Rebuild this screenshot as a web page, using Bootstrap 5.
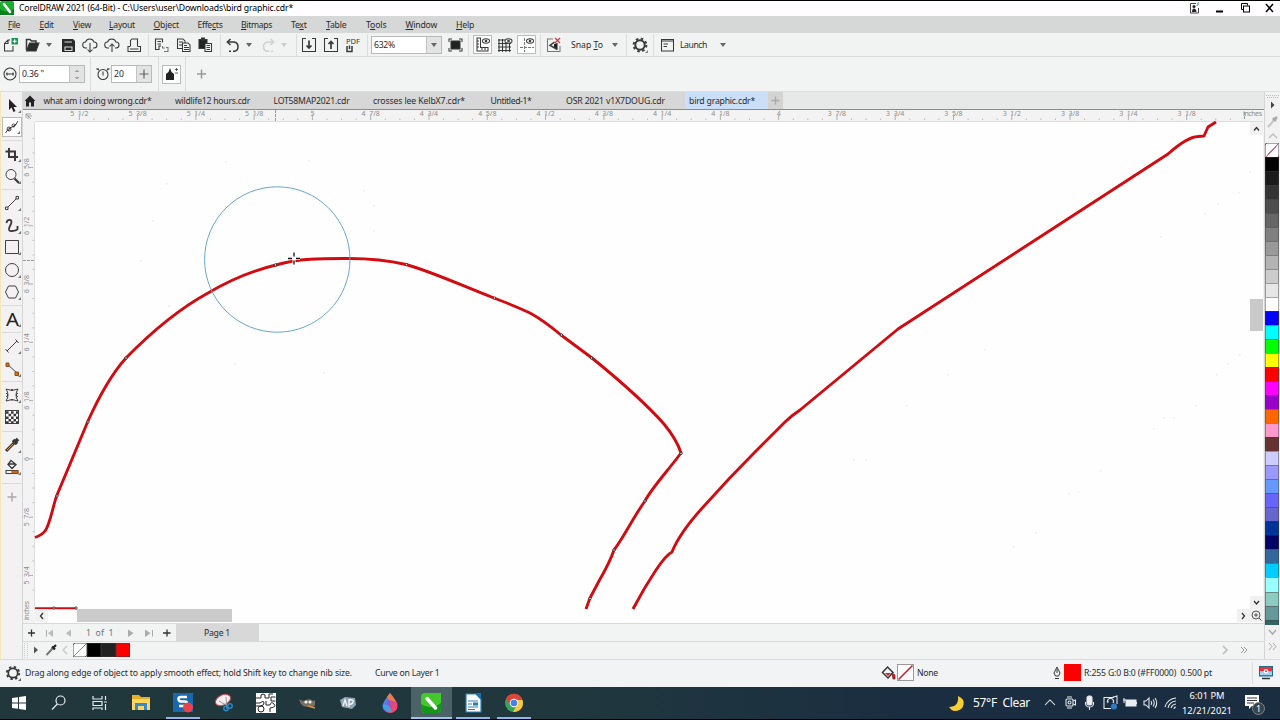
<!DOCTYPE html>
<html lang="en">
<head>
<meta charset="utf-8">
<title>CorelDRAW 2021</title>
<link href="https://cdn.jsdelivr.net/npm/bootstrap@5.3.0/dist/css/bootstrap.min.css" rel="stylesheet">
<style>
body{width:1280px;height:720px;overflow:hidden;background:#f2f3f3;font:8.7px/12px "Noto Sans","Open Sans",sans-serif;color:#2c2c2c;border-top:1px solid #000;border-bottom:1px solid #000}
svg{display:block;flex:none;overflow:visible}
.ic{width:16px;height:16px;fill:none;stroke:#383838;stroke-width:1.05}
.strip{display:grid;align-items:center;justify-items:start;white-space:nowrap}
[data-w]{white-space:nowrap;flex:none}
.titlebar{height:15px;background:#fffdff;padding-bottom:1px;grid-template-columns:19px 1170px 26px 26px 24px auto}
.menubar{height:17px;background:#d6d8d7;padding:1px 0 0 8px;grid-template-columns:31.5px 33.5px 36px 44.5px 44px 43.5px 50px 35px 40px 39.5px 50.5px auto}
.menubar u{text-underline-offset:1px}
.toolbar{height:24px;background:#f1f3f2;border-bottom:1px solid #dadada;padding-left:3px;grid-template-columns:22px 21px 15px 21px 22px 22px 22px 6px 22px 22px 22px 5px 21px 15px 20px 15px 5px 22px 22px 22px 4px 77px 20px 5px 24px 20px 23px 6px 25px 41px 14px 6px 21px 7px 20px 40px auto}
.propbar{height:35px;border-bottom:1px solid #dedede;padding-left:2px;grid-template-columns:17px 71px 6px 15px 47px 4px 23px 9px auto}
.vsep{width:1px;height:22px;background:#dcdcdc}
.propbar .vsep{height:34px}
.dd{border:3px solid transparent;border-top:4px solid #666;border-bottom:0;width:0;height:0}
.dd.faint{border-top-color:#ccc}
.field{height:18px;border:1px solid #b9b9b9;background:#fff;padding-left:2px}
.field .knob{background:#e3e3e3;border-left:1px solid #c4c4c4}
.pressed{width:19px;height:19px;background:#fff;border:1px solid #bbb;display:flex;align-items:center;justify-content:center}
.toolbox{width:23px;flex:none;border-left:1px solid #f4e6b8;border-right:1px solid #d6d6d6;padding-top:3px;background:#f2f2f2;display:grid;align-content:start;justify-items:center;grid-template-rows:22px 27px 22px 27px 23px 21px 23px 22px 27px 27px 23px 26px 22px 28px 22px 30px 20px}
.tool{position:relative;width:20px;height:20px;display:flex;align-items:center;justify-content:center}
.tool .ic{stroke-width:.95}
.fly::after{content:"";position:absolute;right:1px;bottom:2px;border-left:3px solid transparent;border-bottom:3px solid #777}
.rule::before{content:"";position:absolute;left:0;right:0;top:-4px;height:1px;background:#dadada}
.tabs{height:18px;background:#e7e8e8;border-bottom:1px solid #45a5bd}
.tabset{background:#d7d7d7;height:17px;width:662px;padding-top:1px;grid-template-columns:20.5px 131.5px 98.5px 99.5px 117.5px 75.5px auto}
.tab-on{background:#cbdff8;width:83px;height:17px;padding:1px 0 0 4px}
.tab-add{width:15px;height:17px;background:#d3d3d3}
.ruler text{font-size:7px;fill:#8c8c8c}
.sheet{background:#fefefe}
.sb-btn{background:#f1f1f1;width:13px;height:13px}
.pagenav{height:19px;border-top:1px solid #d9dada;border-bottom:1px solid #d9dada;padding-left:4px;grid-template-columns:18px 19px 22px 42px 17px 18px 13px auto}
.page-on{background:#d8d8d8;width:83px;height:17px;display:flex;align-items:center;padding-left:28px}
.docpal{height:16px;grid-template-columns:10px 12px 16px 12px auto 18px 24px}
.sw{border:1px solid rgba(60,60,60,.45);width:14.2px;height:14px}
.palette{width:16px;flex:none;border-left:1px solid #d4d4d4;background:#f2f2f2}
.palette .sw{height:14.02px;flex:none;border-width:1px 1px 0 1px;width:14px}
.status{height:28px;border-top:1px solid #dadada;background:#f2f3f4;padding:0 0 2px 5px;grid-template-columns:20px 350px 506px 16px 20px 136px 11px 20px 168px 7px auto}
.taskbar{height:32px;background:linear-gradient(90deg,#21373c 0,#20373e 45%,#1b2e41 70%,#1b2d40 100%);color:#fff}
.app{width:41.4px;height:32px;display:flex;align-items:center;justify-content:center;flex:none}
.app svg{width:20px;height:20px}
.run{background:linear-gradient(#8db7e8,#8db7e8) center bottom/34px 2px no-repeat}
.run.on{background:linear-gradient(#9cc4ee,#9cc4ee) center bottom/41px 2px no-repeat,#4b6266}
.tray{grid-template-columns:24px 71px 21px 19px 19px 20px 20px 22px 17px 63px auto}
.tray .ic{stroke:#e8edf0}
#zoomField{width:71px}#nib{width:66px}#rate{width:41px}
#work{height:567px}#doc{width:1241px;flex:none}
#vbar{width:13px}#vthumb{height:32px;background:#c9c9c9;margin-top:164px}
#hbar{height:14px}#hthumb{width:155px;background:#cbcbcb;margin-left:29px;height:13px}
#start{width:38px}#weather{font-size:12px}#clock{width:50px;font-size:9.3px;line-height:15px}
#tray{width:331px}
</style>
</head>
<body>
<div class="strip titlebar">
  <svg width="14" height="14" viewBox="0 0 14 14"><rect width="14" height="14" rx="2" fill="#16ae2b"/><path d="M0 8Q7 14 14 8V14H0z" fill="#078019"/><path d="M4 3L10 11" stroke="#fff" stroke-width="2.6" stroke-linecap="round"/></svg>
  <span data-w="274" class="text-black">CorelDRAW 2021 (64-Bit) - C:\Users\user\Downloads\bird graphic.cdr*</span>
  <svg width="12" height="12" viewBox="0 0 12 12" fill="none" stroke="#444"><path d="M7 1.5H1.500V11H9.500V6"/><circle cx="5" cy="4.500" r="1.500" fill="#222" stroke="none"/><path d="M3 10Q3 6.500 5 6.500T7.500 10z" fill="#222" stroke="none"/><path d="M8 4A2 2 0 0 1 10 2M8 1.500L10 0.500" stroke="#4aa58e"/></svg>
  <svg width="8" height="12"><path d="M1 9.500H8" stroke="#000" stroke-width="2"/></svg>
  <svg width="9" height="10" viewBox="0 0 9 10" fill="none" stroke="#000"><path d="M2.500 6.500H.500V.500H6.500V2.500"/><rect x="2.500" y="3" width="6" height="6"/></svg>
  <svg width="9" height="10"><path d="M1 1L8 9M8 1L1 9" stroke="#000" stroke-width="1.500"/></svg>
</div>
<nav class="strip menubar">
  <span data-w="12"><u>F</u>ile</span><span data-w="14"><u>E</u>dit</span><span data-w="18"><u>V</u>iew</span><span data-w="26"><u>L</u>ayout</span><span data-w="25.500"><u>O</u>bject</span><span data-w="25">Effe<u>c</u>ts</span><span data-w="31"><u>B</u>itmaps</span><span data-w="15.500">Te<u>x</u>t</span><span data-w="20.500"><u>T</u>able</span><span data-w="20.500">T<u>o</u>ols</span><span data-w="31.500"><u>W</u>indow</span><span data-w="18"><u>H</u>elp</span>
</nav>
<div class="strip toolbar">
  <svg class="ic" viewBox="0 0 16 16"><path d="M7 3H5L1.500 6.500V14H10V9M5 3V6.500H1.500"/><rect x="8.500" y="1" width="6.500" height="6.500" fill="#1c9157" stroke="none"/><path d="M11.700 2.300V6.300M9.700 4.300H13.700" stroke="#fff"/></svg>
  <svg class="ic" viewBox="0 0 16 16"><path d="M1.500 13V2.500H5L6.500 4H11V6" stroke-width="1.500"/><path d="M1.500 14L4.500 6H14L11 14z" fill="#2b2b2b"/></svg>
  <i class="dd"></i>
  <svg class="ic" viewBox="0 0 16 16"><path d="M1 2H12L14 4V15H1z" fill="#2b2b2b" stroke="none"/><path d="M3.500 5H11M4 13.500H11V10H4z" stroke="#ddd" fill="#2b2b2b"/></svg>
  <svg class="ic" viewBox="0 0 16 16"><path d="M5 11H4A3 3 0 0 1 3.500 5A4.500 4.500 0 0 1 12 5A3 3 0 0 1 12 11H11M8 6V15M5.500 12.500L8 15L10.500 12.500"/></svg>
  <svg class="ic" viewBox="0 0 16 16"><path d="M5 11H4A3 3 0 0 1 3.500 5A4.500 4.500 0 0 1 12 5A3 3 0 0 1 12 11H11M8 15V7M5.500 9.500L8 7L10.500 9.500"/></svg>
  <svg class="ic" viewBox="0 0 16 16"><path d="M4.500 9V3.500L6 2H11.500V9M4.500 9.500H2V14.500H14.500V9.500H11.500M4 12H12.500"/></svg>
  <i class="vsep"></i>
  <svg class="ic" viewBox="0 0 16 16"><path d="M7 9H5V12.500H1.500V2H8.500V5.500M3.500 4.500H7M3.500 7H7" /><path d="M8.500 9V11H11M10 14.500H14V10.500H12" stroke="#777"/></svg>
  <svg class="ic" viewBox="0 0 16 16"><path d="M1.500 2H7L9 4V11.500H1.500zM3 5H7M3 8H6"/><path d="M6.500 6H12L14 8V14.500H6.500z" fill="#f5f5f5"/><path d="M8 8.500H11M8 10.500H13M8 12.500H13"/></svg>
  <svg class="ic" viewBox="0 0 16 16"><path d="M1 2.500H9V11.500H1zM3.500 1H6.500V3H3.500z" fill="#222"/><path d="M7 6.500H13.500V14.500H7z" fill="#f5f5f5"/><path d="M8.500 8.500H12M8.500 10.500H12M8.500 12.500H12"/></svg>
  <i class="vsep"></i>
  <svg class="ic" viewBox="0 0 16 16"><path d="M3 5H9A4.700 4.700 0 0 1 9 14.300H8" stroke-width="1.500"/><path d="M5.500 2L2.300 5L5.500 8M4 14.300H6" stroke-width="1.500"/></svg>
  <i class="dd"></i>
  <svg class="ic" viewBox="0 0 16 16"><g stroke="#d0d0d0" stroke-width="1.500"><path d="M12 5H6.500A4.700 4.700 0 0 0 6.500 14.300H8"/><path d="M9.500 2L12.700 5L9.500 8M10 14.300H12"/></g></svg>
  <i class="dd faint"></i>
  <i class="vsep"></i>
  <svg class="ic" viewBox="0 0 16 16"><path d="M5 1.500H1.500V14.500H14.500V1.500H11"/><path d="M8 3.500V11M5.500 8.500L8 11L10.500 8.500" stroke-width="1.700"/></svg>
  <svg class="ic" viewBox="0 0 16 16"><path d="M5 1.500H1.500V14.500H14.500V1.500H11"/><path d="M8 12V4.500M5.500 7L8 4.500L10.500 7" stroke-width="1.700"/></svg>
  <svg class="ic" viewBox="0 0 16 16"><text x="1" y="7" font-size="7.500" textLength="14" lengthAdjust="spacingAndGlyphs" fill="#333" stroke="none">PDF</text><path d="M2 9V14.500H7V9M4.500 8.500V12" stroke-width="1.500"/></svg>
  <i class="vsep"></i>
  <div class="field d-flex align-items-center" id="zoomField"><span data-w="21">632%</span><span class="knob ms-auto h-100 d-flex align-items-center px-1"><i class="dd"></i></span></div>
  <svg class="ic" viewBox="0 0 16 16"><rect x="3" y="4" width="9" height="8" fill="#222"/><path d="M1 5V2H4M11 2H14V5M14 11V14H11M4 14H1V11"/></svg>
  <i class="vsep"></i>
  <span class="pressed"><svg class="ic" viewBox="0 0 16 16"><path d="M2 1V14H13V10.500H5.500V1zM2 4H4M2 7H4M2 10H4M7 11V13M10 11V13"/><ellipse cx="11" cy="4" rx="3.500" ry="2.200"/><circle cx="11" cy="4" r=".8" fill="#333"/></svg></span>
  <svg class="ic" viewBox="0 0 16 16"><path d="M1 3H8M1 6.500H14M1 10H14M1 13.500H14M2 2V15M5.500 2V15M9 6V15M12.500 7V15"/><ellipse cx="11.500" cy="4" rx="3.500" ry="2.200" fill="#f5f5f5"/><circle cx="11.500" cy="4" r=".8" fill="#333"/></svg>
  <span class="pressed"><svg class="ic" viewBox="0 0 16 16"><path d="M5.500 1V15M1 10.500H15" stroke-dasharray="3 1" stroke="#777"/><ellipse cx="11" cy="4" rx="3.500" ry="2.200"/><circle cx="11" cy="4" r=".8" fill="#333"/></svg></span>
  <i class="vsep"></i>
  <svg class="ic" viewBox="0 0 16 16"><path d="M7 2H1.500V14.500H14V9" stroke="#777"/><path d="M8.500 5L4 8.500L11.500 12.500" stroke-width="1.500"/><path d="M8 7L11.500 6V12L8 10z" fill="#222" stroke="none"/><path d="M9 1L14 6M14 1L9 6" stroke="#df3441" stroke-width="1.300"/></svg>
  <span data-w="32">Snap <u>T</u>o</span>
  <i class="dd"></i><i class="vsep"></i>
  <svg class="ic" viewBox="0 0 16 16"><circle cx="8" cy="8" r="4.700" stroke-width="2"/><circle cx="8" cy="8" r="6.400" stroke-width="1.900" stroke-dasharray="2.500 2.526"/><path d="M16 13V16H13z" fill="#888" stroke="none"/></svg>
  <i class="vsep"></i>
  <svg class="ic" viewBox="0 0 16 16"><path d="M1.500 2.500H13.500V14H1.500zM1.500 4H13.500M3.500 7H8M3.500 9.500H7"/></svg>
  <span data-w="27">Launch</span><i class="dd"></i>
</div>
<div class="strip propbar">
  <svg class="ic" viewBox="0 0 16 16"><circle cx="8" cy="8" r="6"/><path d="M4 8H12M5 6.500V9.500M11 6.500V9.500"/></svg>
  <div class="field d-flex align-items-center" id="nib"><span data-w="22">0.36 "</span><span class="knob ms-auto h-100 d-flex align-items-center"><svg width="14" height="14" fill="none" stroke="#666"><path d="M5.500 5L7 3.500L8.500 5M5.500 10L7 11.500L8.500 10"/></svg></span></div>
  <i class="vsep"></i>
  <svg class="ic" viewBox="0 0 16 16"><circle cx="7" cy="8.500" r="5"/><path d="M7 5.500V9.500M.5 2.500L3 4M13.500 2.500L11 4M3 3H.5M11 3H13.500"/></svg>
  <div class="field d-flex align-items-center" id="rate"><span data-w="10">20</span><span class="knob ms-auto h-100 d-flex align-items-center"><svg width="14" height="16" fill="none" stroke="#666"><path d="M2.500 8H11.500M7 3.500V12.500" stroke-width="1.200"/></svg></span></div>
  <i class="vsep"></i>
  <span class="pressed"><svg class="ic" viewBox="0 0 16 16"><path d="M2 14V8L4.500 6L6 2L7.500 6L10 8V14zM2 9H10" fill="#222" stroke="none"/><path d="M12.500 2V5M11 3.500H14M11 7H14" stroke-width=".8"/></svg></span>
  <i class="vsep"></i>
  <svg class="ic" viewBox="0 0 16 16"><path d="M3 8H12M7.500 3.500V12.500" stroke="#999" stroke-width="1.500"/></svg>
</div>
<main class="d-flex" id="work">
  <aside class="toolbox">
    <span class="tool fly"><svg class="ic" viewBox="0 0 16 16"><path d="M5 2V13L7.500 10.500L9.500 15L11.500 14L9.500 10H13z" fill="#222" stroke="none"/></svg></span>
    <span class="pressed tool fly"><svg class="ic" viewBox="0 0 16 16"><path d="M1.500 14Q4 9 8 8T14 2M4 12L7 8M9 8L13 4"/><circle cx="5" cy="10" r="2"/><circle cx="9.500" cy="6.500" r="1.500"/></svg></span>
    <span class="tool fly rule"><svg class="ic" viewBox="0 0 16 16"><path d="M5 2V11H14M1.500 5.500H11V15" stroke-width="2"/></svg></span>
    <span class="tool fly"><svg class="ic" viewBox="0 0 16 16"><circle cx="7" cy="6.500" r="5"/><path d="M10.500 10.500L15 15" stroke-width="2.200"/></svg></span>
    <span class="tool fly rule"><svg class="ic" viewBox="0 0 16 16"><path d="M4 12L12 4M1.500 12H4V14.500H1.500zM12 1.500H14.500V4H12z"/></svg></span>
    <span class="tool fly"><svg class="ic" viewBox="0 0 16 16"><path d="M2.500 5Q3 1.500 6 2T6 8T8 13T13.500 11V8" stroke-width="1.800"/></svg></span>
    <span class="tool fly"><svg class="ic" viewBox="0 0 16 16"><path d="M1.500 1.500H14.500V14.500H1.500z"/></svg></span>
    <span class="tool fly"><svg class="ic" viewBox="0 0 16 16"><circle cx="8" cy="8" r="6.500"/></svg></span>
    <span class="tool fly"><svg class="ic" viewBox="0 0 16 16"><path d="M4.500 2H11.500L14.500 8L11.500 14H4.500L1.500 8z"/></svg></span>
    <span class="tool fly rule"><svg class="ic" viewBox="0 0 16 16"><text x="2" y="14.500" font-size="18" textLength="13" lengthAdjust="spacingAndGlyphs" fill="#222" stroke="none">A</text></svg></span>
    <span class="tool fly rule"><svg class="ic" viewBox="0 0 16 16"><path d="M3 13L13 3M1.500 11L4.500 14.500M11.500 1.500L14.500 5"/></svg></span>
    <span class="tool fly"><svg class="ic" viewBox="0 0 16 16"><path d="M3 3L13 12"/><path d="M2 2H5V5.500H2zM11 11H14.500V14.500H11z" fill="#d56b20" stroke="#8a4a1d"/></svg></span>
    <span class="tool fly rule"><svg class="ic" viewBox="0 0 16 16"><path d="M2 2Q8 5 14 2Q10 8 14 14Q8 11 2 14Q6 8 2 2zM7 2.500H9M7 13H9M2 6L4 8L2 10M14 6L12 8L14 10"/></svg></span>
    <span class="tool"><svg class="ic" viewBox="0 0 16 16"><rect x="1.500" y="1.500" width="13" height="13" fill="#fff"/><path d="M2 3.500H14M2 8.700H14M2 13.500H14" stroke-width="2.500" stroke-dasharray="2.600 2.400"/><path d="M4.500 6H14M4.500 11.200H14" stroke-width="2.500" stroke-dasharray="2.600 2.400"/></svg></span>
    <span class="tool fly rule"><svg class="ic" viewBox="0 0 16 16"><path d="M2 14L10 6" stroke-width="3"/><path d="M3 13L9 7" stroke="#e8a05a"/><path d="M9 3L13 7M10 6L14 2" stroke-width="3.500"/></svg></span>
    <span class="tool fly"><svg class="ic" viewBox="0 0 16 16"><path d="M7 1.500L12 5.500L8 9.500L4 5.500zM5 5H11" stroke-width="1.300"/><rect x="2" y="11.500" width="12" height="3"/><rect x="8" y="12" width="6" height="2" fill="#df722a" stroke="#b7571b"/></svg></span>
    <span class="tool rule"><svg class="ic" viewBox="0 0 16 16"><path d="M3.500 8H12.500M8 3.500V12.500" stroke="#aaa" stroke-width="1.500"/></svg></span>
  </aside>
  <section class="d-flex flex-column" id="doc">
    <div class="tabs d-flex">
      <div class="strip tabset">
        <svg width="14" height="14" viewBox="0 0 14 14"><path d="M7 1.500L1.500 7H3V12.500H6V8.500H8V12.500H11V7H12.500z" fill="#222"/></svg>
        <span data-w="108">what am i doing wrong.cdr*</span><span data-w="75">wildlife12 hours.cdr</span><span data-w="76">LOT58MAP2021.cdr</span><span data-w="92">crosses lee KelbX7.cdr*</span><span data-w="41">Untitled-1*</span><span data-w="99">OSR 2021 v1X7DOUG.cdr</span>
      </div>
      <div class="tab-on d-flex align-items-center"><span data-w="66">bird graphic.cdr*</span></div>
      <div class="tab-add"><svg width="15" height="17"><path d="M3.500 8.500H11.500M7.500 4.500V12.500" stroke="#aaa" stroke-width="1.500"/></svg></div>
    </div>
    <svg class="ruler" id="rulerX" width="1240" height="12" viewBox="23 110 1240 12"></svg>
    <div class="d-flex">
      <svg class="ruler" id="rulerY" width="12" height="501" viewBox="23 122 12 501"></svg>
      <div>
        <div class="d-flex sheet">
          <svg id="art" width="1215" height="487" viewBox="35 122 1215 487" fill="none">
            <g id="specks" fill="#f0e6ee"></g>
            <g stroke="#d30a0f" stroke-width="2.900" stroke-linejoin="round">
              <path d="M35 537.500Q42 535 45 531C50 525 53 505 57 495L88 421Q107 379 126 358Q168 315 208 293Q242 273 276 265C300 258 325 258.500 349 258.500Q380 258.500 406 264.500C433 272 465 287 494 298Q515 306 530 313Q543 320 561 335L592 358Q640 397 664 424Q677 440 681 453C666 473 651 489 645 501C634 516 624 537 614 550Q610 562 599 581L590 598L586 609"/>
              <path d="M633 609Q644 588 656 570Q666 555 672 552Q680 532 705 505Q730 477 755 452L785 422Q791 416 800 410L898 329L1168 154Q1187 137 1198 136.500L1204 136L1208 127L1216 122"/>
              <path d="M35 608.300H77" stroke-width="2"/>
            </g>
            <circle cx="277.300" cy="259.500" r="72.700" stroke="#65a9ca"/>
            <path id="nodes" stroke="#333" fill="#fff" stroke-width=".8"/>
            <path d="M288 258.500H300M294 252.500V264.500" stroke="#fff" stroke-width="3"/>
            <path d="M288 258.500H292M296 258.500H300M294 252.500V256.500M294 260.500V264.500" stroke="#111" stroke-width="1.300"/>
          </svg>
          <div class="d-flex flex-column" id="vbar"><span class="sb-btn"><svg width="13" height="13"><path d="M4 8.500L6.500 5.500L9 8.500" fill="none" stroke="#333" stroke-width="1.300"/></svg></span><span id="vthumb"></span><span class="sb-btn mt-auto"><svg width="13" height="13"><path d="M4 5L6.500 8L9 5" fill="none" stroke="#333" stroke-width="1.300"/></svg></span></div>
        </div>
        <div class="d-flex sheet" id="hbar"><span class="sb-btn"><svg width="13" height="13"><path d="M8 4L5.500 7L8 10" fill="none" stroke="#333" stroke-width="1.300"/></svg></span><span id="hthumb"></span><span class="sb-btn ms-auto"><svg width="13" height="13"><path d="M5 4L7.500 7L5 10" fill="none" stroke="#333" stroke-width="1.300"/></svg></span><span class="sb-btn"><svg width="13" height="13" fill="none" stroke="#555"><circle cx="6" cy="6" r="4"/><path d="M9 9L11.500 11.500M4 6H8M6 4V8"/></svg></span></div>
      </div>
    </div>
    <div class="strip pagenav">
      <svg width="10" height="10"><path d="M1 5H8M4.500 1.500V8.500" stroke="#333" stroke-width="1.300"/></svg>
      <svg width="9" height="10"><path d="M1.500 2V8.500" stroke="#aaa"/><path d="M8 1.500V9L3 5.250z" fill="#bbb"/></svg>
      <svg width="8" height="10"><path d="M7 1.500V9L2 5.250z" fill="#bbb"/></svg>
      <span data-w="27.500" class="text-secondary">1 &nbsp;of &nbsp;1</span>
      <svg width="8" height="10"><path d="M0 1.500V9L5.500 5.250z" fill="#aaa"/></svg>
      <svg width="9" height="10"><path d="M7.500 2V8.500" stroke="#aaa"/><path d="M0 1.500V9L5.500 5.250z" fill="#aaa"/></svg>
      <svg width="10" height="10"><path d="M0 5H7.500M4 1.500V8.500" stroke="#333" stroke-width="1.300"/></svg>
      <span class="page-on"><span data-w="26">Page 1</span></span>
    </div>
    <div class="strip docpal">
      <svg width="6" height="15"><path d="M1.500 0V15M4.500 0V15" stroke="#ccc" stroke-dasharray="1 1"/></svg>
      <svg width="6" height="10"><path d="M1 1.500V8.500L5 5z" fill="#555"/></svg>
      <svg width="13" height="14"><path d="M1.500 12L8 5" stroke="#777" stroke-width="2"/><path d="M7 3.500L10 6.500M8 5L11 2" stroke="#222" stroke-width="2.200"/></svg>
      <svg width="7" height="10" fill="none" stroke="#ccc"><path d="M6 1L2 5L6 9" stroke-width="1.500"/></svg>
      <span class="d-flex" id="docSwatches"></span>
      <svg width="7" height="10" fill="none" stroke="#bbb"><path d="M1 1L5 5L1 9" stroke-width="1.500"/></svg>
      <svg width="8" height="10" fill="none" stroke="#999"><path d="M1 2L4 5L1 8M4 2L7 5L4 8"/></svg>
    </div>
  </section>
  <aside class="palette d-flex flex-column" id="palette">
    <svg width="15" height="51" fill="none"><path d="M1 3.500H14M2 5.500H14" stroke="#bbb" stroke-dasharray="1 1"/><path d="M6 9.500V16.500L9.500 13z" fill="#444"/><path d="M3 35L10 27" stroke="#c4c4c4" stroke-width="2"/><path d="M8 26L11 29M10 27L12 25" stroke="#aaa" stroke-width="2.500"/><path d="M4 46L8 42L12 46" stroke="#c0c0c0" stroke-width="1.500"/></svg>
  </aside>
</main>
<footer class="strip status">
  <svg class="ic" viewBox="0 0 16 16"><circle cx="8" cy="8" r="4.700" stroke-width="1.700"/><circle cx="8" cy="8" r="6.200" stroke-width="1.800" stroke-dasharray="2.400 2.470"/><path d="M16 13V16H13z" fill="#666" stroke="none"/></svg>
  <span data-w="327">Drag along edge of object to apply smooth effect; hold Shift key to change nib size.</span>
  <span data-w="64.500">Curve on Layer 1</span>
  <svg class="ic" viewBox="0 0 16 16"><path d="M6.500 2L12 7.500L7 13L1.500 7.500z" stroke-width="1.500"/><path d="M4 8H10L7 11z" fill="#d0202a" stroke="none"/><path d="M11 8L14 10V14H12z" fill="#d0202a" stroke="#801015" stroke-width=".7"/></svg>
  <svg width="17" height="17"><rect x=".5" y=".5" width="16" height="16" fill="#fff" stroke="#999"/><path d="M1.500 15.500L15.500 1.500" stroke="#c42332" stroke-width="1.600"/></svg>
  <span data-w="21">None</span>
  <svg width="8" height="14" fill="none" stroke="#333"><path d="M4 1L7 7L5.500 10H2.500L1 7zM4 3V7M2 12.500H6"/></svg>
  <svg width="17" height="17"><rect width="17" height="17" fill="#f00"/></svg>
  <span data-w="128">R:255 G:0 B:0 (#FF0000) &nbsp;0.500 pt</span>
  <i class="vsep"></i>
  <svg width="14" height="14" viewBox="0 0 14 14"><rect width="14" height="10.500" fill="#256983"/><rect x="1" y="1" width="12" height="4.200" fill="#ef3038"/><rect x="1" y="5.200" width="12" height="4" fill="#9dd3ef"/><circle cx="7" cy="5.200" r="2.300" fill="#fff"/><circle cx="7" cy="5.200" r="1" fill="#e53a3a"/><path d="M3 12.500H11" stroke="#333" stroke-width="1.500"/></svg>
</footer>
<div class="taskbar d-flex">
  <span class="app" id="start"><svg viewBox="0 0 20 20" fill="#fff"><path d="M3 5L9 4.200V9.500H3zM10 4L17 3V9.500H10zM3 10.500H9V15.800L3 15zM10 10.500H17V17L10 16z"/></svg></span>
  <span class="app"><svg viewBox="0 0 20 20" fill="none" stroke="#e6ecee" stroke-width="1.200"><circle cx="11.500" cy="7.500" r="4.500"/><path d="M8.300 11L3 16.500"/></svg></span>
  <span class="app"><svg viewBox="0 0 20 20" fill="none" stroke="#e6ecee" stroke-width="1.200"><path d="M3 3V6H12V3M3 8.500H12V12.500H3zM3 17V15H12V17M15.500 3V7M15.500 11V17M14 9H17"/></svg></span>
  <span class="app"><svg viewBox="0 0 20 20"><path d="M1 2H8L10 4H19V17H1z" fill="#e9ad25"/><rect x="1" y="6" width="18" height="11" fill="#ffd760"/><path d="M4 17V10H16V17H13V13H7V17z" fill="#348acb"/></svg></span>
  <span class="app run"><svg viewBox="0 0 20 20"><rect width="20" height="19" fill="#1768ad"/><path d="M14 4H7.500Q5.500 4 5.500 6T7.500 8.500H12Q14 8.500 14 10.500T12 13H6" fill="none" stroke="#fff" stroke-width="2.500"/><circle cx="15" cy="14.500" r="5" fill="#e8434a"/></svg></span>
  <span class="app"><svg viewBox="0 0 20 20"><ellipse cx="9" cy="7" rx="8" ry="5" transform="rotate(-25 9 7)" fill="#f3eef0" stroke="#c94a55"/><path d="M5 8L14 13M12 4L13 16" stroke="#999"/><circle cx="12" cy="15.500" r="2.200" fill="none" stroke="#2688c4" stroke-width="1.500"/><circle cx="16" cy="13" r="2.200" fill="none" stroke="#2688c4" stroke-width="1.500"/></svg></span>
  <span class="app"><svg viewBox="0 0 20 20" fill="none" stroke="#222"><rect width="20" height="20" fill="#fff" stroke="none"/><path d="M0 5H5Q4 1 7 1T9 5H13V1H17M0 10H4Q8 7 8 10T4 13H0M10 8V12H14Q15 8 18 11T14 15V19M19.500 4H15V8H19.500"/><circle cx="5" cy="16" r="3"/></svg></span>
  <span class="app"><svg viewBox="0 0 20 20"><path d="M2 6Q5 9 9 7T16 8L18 7V12Q17 15 12 14Q4 15 2 6z" fill="#777165"/><circle cx="9" cy="9" r="1.600" fill="#eee"/><circle cx="13" cy="9" r="1.600" fill="#eee"/><path d="M11 13L18 15" stroke="#d99034" stroke-width="1.500"/></svg></span>
  <span class="app"><svg viewBox="0 0 20 20"><path d="M2 7L7 4L17 5L18 12L14 16L4 14z" fill="#8fa3b5"/><path d="M5 13L7 7L9 13M11 6V14M11 7Q16 6 15 9T11 11" fill="none" stroke="#f7fafc" stroke-width="1.300"/></svg></span>
  <span class="app"><svg viewBox="0 0 20 20"><defs><linearGradient id="drop" x1="0" x2="1" y2=".7"><stop offset=".15" stop-color="#28b4ed"/><stop offset=".5" stop-color="#8b56d6"/><stop offset=".8" stop-color="#ef4772"/></linearGradient></defs><path d="M10 0Q18 9 17.500 13A7.500 7 0 0 1 2.500 13Q3 9 10 0z" fill="url(#drop)"/><path d="M10 0Q14 5 16 9L9 7L7 4z" fill="#f07c43"/><path d="M3 12Q9 9 12 19.500Q3 19 3 12z" fill="#26b8ef" opacity=".75"/></svg></span>
  <span class="app run on"><svg viewBox="0 0 20 20"><path d="M4 0H20V16Q20 20 16 20H4Q0 20 0 16V4Q0 0 4 0z" fill="#42c82b"/><path d="M0 11Q10 18 20 10V16Q20 20 16 20H4Q0 20 0 16z" fill="#16951c"/><path d="M6 5.500L14.500 15" stroke="#fff" stroke-width="3.500" stroke-linecap="round"/></svg></span>
  <span class="app run"><svg viewBox="0 0 20 20"><path d="M3 1H13L18 6V19H3z" fill="#fff" stroke="#2884bd" stroke-width="1.200"/><path d="M12 0H18V7z" fill="#1771aa"/><path d="M5 8H15M5 14H15M5 16.500H12M5 11H9" stroke="#2884bd"/><rect x="10" y="9.500" width="5" height="3" fill="#247cb1"/></svg></span>
  <span class="app run"><svg viewBox="0 0 20 20"><circle cx="10" cy="10" r="9" fill="#35a45a"/><path d="M2 5.500A9 9 0 0 1 18.500 7H10L6 12z" fill="#db4638"/><path d="M18.500 7A9 9 0 0 1 9 19L13.500 11L12 7z" fill="#fbc93b"/><circle cx="10" cy="10" r="4.300" fill="#fff"/><circle cx="10" cy="10" r="3.300" fill="#467ee9"/></svg></span>
  <div class="strip tray ms-auto" id="tray">
    <svg width="17" height="18"><path d="M9 2Q16 5 14.500 11T5 17Q2 16 0 13Q10 13 9 2z" fill="#f9cf33"/></svg>
    <span data-w="57" id="weather">57°F &nbsp;Clear</span>
    <svg class="ic" viewBox="0 0 16 16"><path d="M1 10L6 5L11 10"/></svg>
    <svg class="ic" viewBox="0 0 16 16"><rect x="1" y="4" width="7" height="7" rx="1"/><circle cx="4.500" cy="7.500" r="1.500"/><path d="M8 6L10.500 5V10L8 9M2 2H7M2 13H7"/></svg>
    <svg class="ic" viewBox="0 0 16 16"><rect x="3" y="1" width="5" height="9" rx="2" fill="#eee"/><path d="M1.500 7V9Q2 12 5.500 12T9.500 9V7M5.500 12V15"/></svg>
    <svg class="ic" viewBox="0 0 16 16"><path d="M11 2.500H1V13.500H8M9 2.500L14 1V9M5 8A3 3 0 1 1 10 8M5 4V7"/><circle cx="11" cy="11.500" r="3" fill="#3478bf" stroke="none"/></svg>
    <svg class="ic" viewBox="0 0 16 16"><rect x="3" y="5" width="10" height="6" fill="#e8edf0"/><path d="M0 5H3M1 3V8M13.500 7V9"/></svg>
    <svg class="ic" viewBox="0 0 16 16"><path d="M1 6H3L6 3V13L3 10H1zM8 6Q9.500 8 8 10M10 4.500Q12.500 8 10 11.500M12 3Q15.500 8 12 13"/></svg>
    <svg class="ic" viewBox="0 0 16 16"><path d="M0 12A12 12 0 0 1 11 3M3 13A9 9 0 0 1 11 6M6 13A6 6 0 0 1 11 9M9 14A2 2 0 0 1 11 12" /></svg>
    <div id="clock" class="text-center"><div><span data-w="35">6:01 PM</span></div><div><span data-w="50">12/21/2021</span></div></div>
    <svg width="22" height="24" viewBox="0 0 22 24"><path d="M0 4H14V15H7L4 18V15H0z" fill="#fff"/><path d="M2 7H12M2 9.500H12M2 12H9" stroke="#334" stroke-width="1"/><circle cx="13.500" cy="17.500" r="6" fill="#38434b" stroke="#7b858b"/><text x="11" y="21" font-size="9" fill="#fff">1</text></svg>
  </div>
</div>
<script src="https://cdn.jsdelivr.net/npm/bootstrap@5.3.0/dist/js/bootstrap.bundle.min.js"></script>
<script>
// Swatch strips
const colors=['none','#000','#1a1a1a','#333','#4d4d4d','#666','#808080','#999','#b3b3b3','#ccc','#e6e6e6','#fff','#00f','#0ff','#0f0','#ff0','#f00','#f0f','#90c','#f60','#f9c','#633','#ccf','#99f','#69f','#66f','#66c','#039','#006','#369','#0cf','#9ff','#8dcbc0','#699','#366'];
const slash='linear-gradient(to bottom right,#fff 46%,#c66b88 47%,#c66b88 53%,#fff 54%)';
function swatches(host,list){list.forEach((c,i)=>{const s=document.createElement('span');s.className='sw';s.style.background=c==='none'?slash:c;if(host.id==='palette'&&i===list.length-1)s.style.height='5px';host.append(s)})}
const palette=document.getElementById('palette');
swatches(palette,colors);
palette.insertAdjacentHTML('beforeend','<svg width="15" height="32" fill="none" stroke="#aaa"><path d="M4 5L7.500 9L11 5" stroke-width="1.500"/><path d="M4 18L7 21.500L4 25M8 18L11 21.500L8 25"/></svg>');
swatches(document.getElementById('docSwatches'),['none','#000','#222','#f00']);
// Rulers, an eighth of an inch is 58.3px
const fr=['','1/8','1/4','3/8','1/2','5/8','3/4','7/8'];
const name=n=>[Math.floor(n/8),fr[n%8]].filter(Boolean).join('  ');
let x='<rect x="23" y="110" width="1240" height="12" fill="#f3f3f3"/><path d="M26 114L31 119M26 118V114H31M28 119V116H32" fill="none" stroke="#888" stroke-width=".7"/>';
for(let n=44,i=0;n>=25;n--,i++){const p=79.3+58.28*i;x+=`<text x="${p}" y="116" text-anchor="middle" xml:space="preserve">${name(n)}</text><path d="M${p} 114V120" stroke="#b0b0b0"/>`;for(let k=1;k<4;k++)x+=`<path d="M${p+k*14.57} 118.500V120" stroke="#bbb"/>`}
x+='<text x="1243" y="116" textLength="19">inches</text><path d="M1244.500 112V120M275.500 110V122" stroke="#999" stroke-dasharray="3 1"/><path d="M35 121.500H1263" stroke="#ddd"/>';
document.getElementById('rulerX').innerHTML=x;
let y='<rect x="23" y="122" width="12" height="501" fill="#f3f3f3"/><path d="M34.500 122V610" stroke="#ddd"/><path d="M23 260.500H34" stroke="#999" stroke-dasharray="3 1"/>';
for(let n=53,i=0;n>=46;n--,i++){const p=167.500+58.28*i;y+=`<text transform="translate(29 ${p}) rotate(-90)" text-anchor="middle" xml:space="preserve">${name(n)}</text><path d="M29 ${p}H33" stroke="#b0b0b0"/>`;for(let k=-2;k<2;k++)if(k)y+=`<path d="M32.500 ${p+k*14.57}H34" stroke="#bbb"/>`}
y+='<text transform="translate(29 620) rotate(-90)" textLength="19">inches</text>';
document.getElementById('rulerY').innerHTML=y;
// Curve nodes
document.getElementById('nodes').setAttribute('d',[[57,496],[88,422],[126,358],[275.500,265],[406.500,264.500],[494.500,298],[561.500,335],[591.500,358],[681,453.500],[645,501],[614,550],[590,598.500],[54,608],[76,608]].map(([a,b])=>`M${a-1} ${b-1}h2v2h-2z`).join(''));
document.getElementById('specks').innerHTML=[[166,183],[225,161],[308,160],[363,190],[373,205],[373,230],[152,220],[140,260],[168,305],[234,363],[323,372],[1249,171],[1238,192],[1217,203],[1204,213],[1160,236],[853,459],[865,459],[906,405],[947,374],[984,349],[1239,354],[1227,363],[1216,374],[1195,405],[1163,417],[1173,417],[1153,428],[1100,470],[1068,493],[1078,491],[1035,532],[1013,546]].map(([a,b])=>`<rect x="${a}" y="${b}" width="1.500" height="1.500"/>`).join('');
// Track labels to their widths
document.querySelectorAll('[data-w]').forEach(e=>{e.style.letterSpacing=((+e.dataset.w-e.getBoundingClientRect().width)/e.textContent.length).toFixed(3)+'px'});
</script>
</body>
</html>
